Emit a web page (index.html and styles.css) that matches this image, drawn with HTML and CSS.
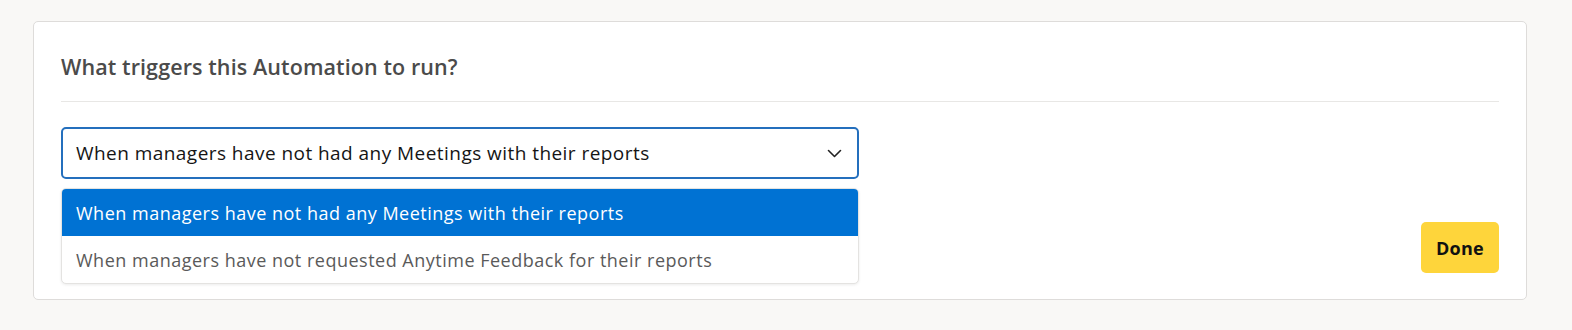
FILE: index.html
```html
<!DOCTYPE html>
<html>
<head>
<meta charset="utf-8">
<link rel="stylesheet" href="styles.css">
</head>
<body>
<div class="page">
  <div class="card">
    <div class="card-header">
      <h2 class="title">What triggers this Automation to run?</h2>
    </div>
    <div class="card-body">
      <div class="select-wrap">
        <div class="select">
          <span class="select-value">When managers have not had any Meetings with their reports</span>
          <svg class="chevron" width="15" height="9" viewBox="0 0 15 9"><path d="M1.5 1.5 L7.5 7.5 L13.5 1.5" fill="none" stroke="#222" stroke-width="1.6" stroke-linecap="round" stroke-linejoin="round"/></svg>
        </div>
        <ul class="menu">
          <li class="option option-active">When managers have not had any Meetings with their reports</li>
          <li class="option">When managers have not requested Anytime Feedback for their reports</li>
        </ul>
      </div>
      <div class="footer">
        <button class="btn-done">Done</button>
      </div>
    </div>
  </div>
</div>
</body>
</html>
```
FILE: styles.css
```css
* { box-sizing: border-box; }
html, body { margin: 0; padding: 0; }
body {
  background: #f9f8f6;
  font-family: "Open Sans", Lato, sans-serif;
  width: 1572px;
  height: 330px;
  overflow: hidden;
}
.page {
  padding: 21px 45px 0 33px;
}
.card {
  background: #fff;
  border: 1px solid #dedcda;
  border-radius: 5px;
  padding: 0 27px 26px 27px;
  height: 279px;
}
.card-header {
  padding-top: 26px;
  padding-bottom: 15px;
  border-bottom: 1px solid #e8e7e5;
}
.title {
  margin: 0;
  font-size: 21.5px;
  line-height: 38px;
  font-weight: 600;
  letter-spacing: 0.1px;
  color: #4b4b4b;
}
.card-body {
  padding-top: 25px;
}
.select-wrap {
  position: relative;
  width: 798px;
}
.select {
  height: 52px;
  border: 2px solid #246fbd;
  border-radius: 5px;
  display: flex;
  align-items: center;
  justify-content: space-between;
  padding: 0 15px 0 13px;
}
.select-value {
  font-size: 19px;
  letter-spacing: 0.45px;
  color: #151515;
}
.chevron { display: block; }
.menu {
  position: absolute;
  top: 61px;
  left: 0;
  width: 798px;
  margin: 0;
  padding: 0;
  list-style: none;
  background: #fff;
  border: 1px solid #e4e3e1;
  border-radius: 5px;
  box-shadow: 0 1px 3px rgba(0,0,0,0.08);
  overflow: hidden;
  z-index: 2;
}
.option {
  height: 47px;
  display: flex;
  align-items: center;
  padding: 0 14px;
  font-size: 18px;
  letter-spacing: 0.5px;
  color: #5a5a5a;
}
.option-active {
  background: #0072d3;
  color: #fff;
}
.footer {
  display: flex;
  justify-content: flex-end;
  margin-top: 43px;
}
.btn-done {
  width: 78px;
  height: 51px;
  background: #fed53b;
  border: none;
  border-radius: 5px;
  font-family: "Open Sans", Lato, sans-serif;
  font-size: 18px;
  font-weight: 700;
  letter-spacing: 0.3px;
  color: #111;
  padding: 0;
}
```
